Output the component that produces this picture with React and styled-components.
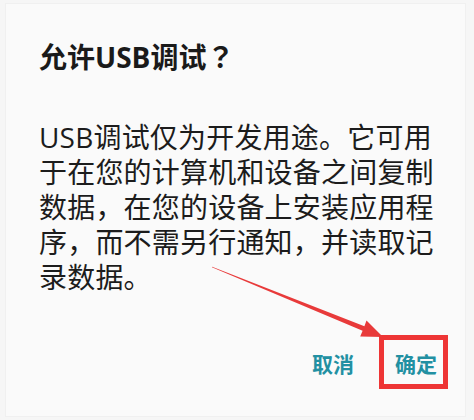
import React from "react";
import styled, { createGlobalStyle } from "styled-components";

const GlobalStyle = createGlobalStyle`
  html, body {
    margin: 0;
    padding: 0;
    background: #f6f6f6;
  }
  body {
    font-family: "Open Sans", "Noto Sans CJK SC", sans-serif;
  }
`;

const Page = styled.div`
  position: relative;
  width: 474px;
  height: 420px;
  box-sizing: border-box;
  padding: 3px 8px 3px 5px;
  background: #f6f6f6;
  overflow: hidden;
`;

const Dialog = styled.div`
  position: relative;
  box-sizing: border-box;
  height: 100%;
  background: #fafafa;
  border: 1px solid #f0f0f0;
  padding: 34px 28px 0 33px;
  display: flex;
  flex-direction: column;
`;

const Title = styled.h1`
  margin: 0;
  font-family: "Open Sans", "Noto Sans CJK SC", sans-serif;
  font-size: 28px;
  line-height: 36px;
  font-weight: 700;
  color: #1a1a1a;
`;

const Message = styled.p`
  margin: 45px 0 0 0;
  width: 404px;
  font-family: "Open Sans", "Noto Sans CJK SC", sans-serif;
  font-size: 28px;
  line-height: 35px;
  font-weight: 400;
  color: #1c1c1c;
  letter-spacing: 0.2px;
`;

const Punct = styled.span`
  font-family: "Noto Sans CJK TC", sans-serif;
`;

const Actions = styled.div`
  margin-top: 58px;
  display: flex;
  justify-content: flex-end;
  gap: 41px;
`;

const ActionButton = styled.button`
  position: relative;
  border: none;
  background: none;
  padding: 0;
  margin: 0;
  font-family: "Noto Sans CJK SC", sans-serif;
  font-size: 21px;
  line-height: 21px;
  font-weight: 700;
  color: #2290a2;
  cursor: pointer;
`;

const Highlight = styled.span`
  position: absolute;
  left: -16px;
  right: -11px;
  top: -18px;
  bottom: -15px;
  border: 5px solid #ee3535;
  pointer-events: none;
`;

const Arrow = styled.svg`
  position: absolute;
  left: 205px;
  top: 260px;
  width: 185px;
  height: 85px;
  pointer-events: none;
`;

export default function App() {
  return (
    <>
      <GlobalStyle />
      <Page>
        <Dialog>
          <Title>
            允许USB调试<Punct>？</Punct>
          </Title>
          <Message>
            USB调试仅为开发用途。它可用于在您的计算机和设备之间复制数据，在您的设备上安装应用程序，而不需另行通知，并读取记录数据。
          </Message>
          <Actions>
            <ActionButton>取消</ActionButton>
            <ActionButton>
              确定
              <Highlight />
            </ActionButton>
          </Actions>
        </Dialog>
        <Arrow viewBox="0 0 185 85">
          <polygon
            points="7.1,6.7 159.4,66.2 161.5,60.6 178,77 155.2,76.4 157.6,70.8 6.9,7.3"
            fill="#e83a3a"
          />
        </Arrow>
      </Page>
    </>
  );
}
